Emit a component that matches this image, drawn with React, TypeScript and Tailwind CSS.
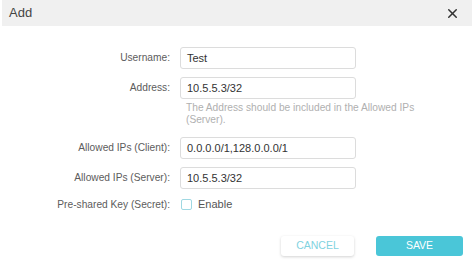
import { X } from "lucide-react";

const FIELDS = [
  { label: "Username:", value: "Test" },
  {
    label: "Address:",
    value: "10.5.5.3/32",
    hint: "The Address should be included in the Allowed IPs (Server).",
  },
  { label: "Allowed IPs (Client):", value: "0.0.0.0/1,128.0.0.0/1" },
  { label: "Allowed IPs (Server):", value: "10.5.5.3/32" },
];

export default function App() {
  return (
    <div className="w-[474px] h-[266px] bg-white font-['Liberation_Sans',Arial,sans-serif] text-[#333] overflow-hidden">
      <div className="mx-[2px] h-[26px] bg-[#f0f0f0] flex items-center justify-between pl-[7px] pr-[12px]">
        <span className="text-[13px] text-[#444]">Add</span>
        <X className="w-[15px] h-[15px] text-[#333]" strokeWidth={2.4} />
      </div>

      <div className="pt-[21px] flex flex-col">
        {FIELDS.map((f, i) => (
          <div key={f.label} className={i === 2 ? "mt-[11px]" : i > 0 ? "mt-[8px]" : ""}>
            <div className="flex items-center">
              <label className="w-[170px] text-right text-[10.2px] text-[#5c5c5c]">
                {f.label}
              </label>
              <div className="ml-[10px] w-[176px] h-[22px] border border-[#dcdcdc] rounded-[3px] flex items-center px-[6px] text-[11px] text-[#333]">
                {f.value}
              </div>
            </div>
            {f.hint && (
              <p className="ml-[186px] mt-[3px] w-[250px] text-[10.2px] leading-[12px] text-[#b0b0b0]">
                {f.hint}
              </p>
            )}
          </div>
        ))}

        <div className="flex items-center mt-[7px]">
          <span className="w-[170px] text-right text-[10.2px] text-[#5c5c5c]">
            Pre-shared Key (Secret):
          </span>
          <span className="ml-[11px] w-[11px] h-[11px] border border-[#9fd8e2] rounded-[2px]" />
          <span className="ml-[6px] text-[11px] text-[#555]">Enable</span>
        </div>
      </div>

      <div className="flex justify-end gap-[22px] pr-[11px] mt-[23px]">
        <button className="w-[73px] h-[20px] rounded-[3px] bg-white shadow-[0_1px_3px_rgba(0,0,0,0.18)] text-[10.5px] text-[#7fd3df]">
          CANCEL
        </button>
        <button className="w-[87px] h-[20px] rounded-[3px] bg-[#4ac6d8] text-[10.5px] text-white">
          SAVE
        </button>
      </div>
    </div>
  );
}
